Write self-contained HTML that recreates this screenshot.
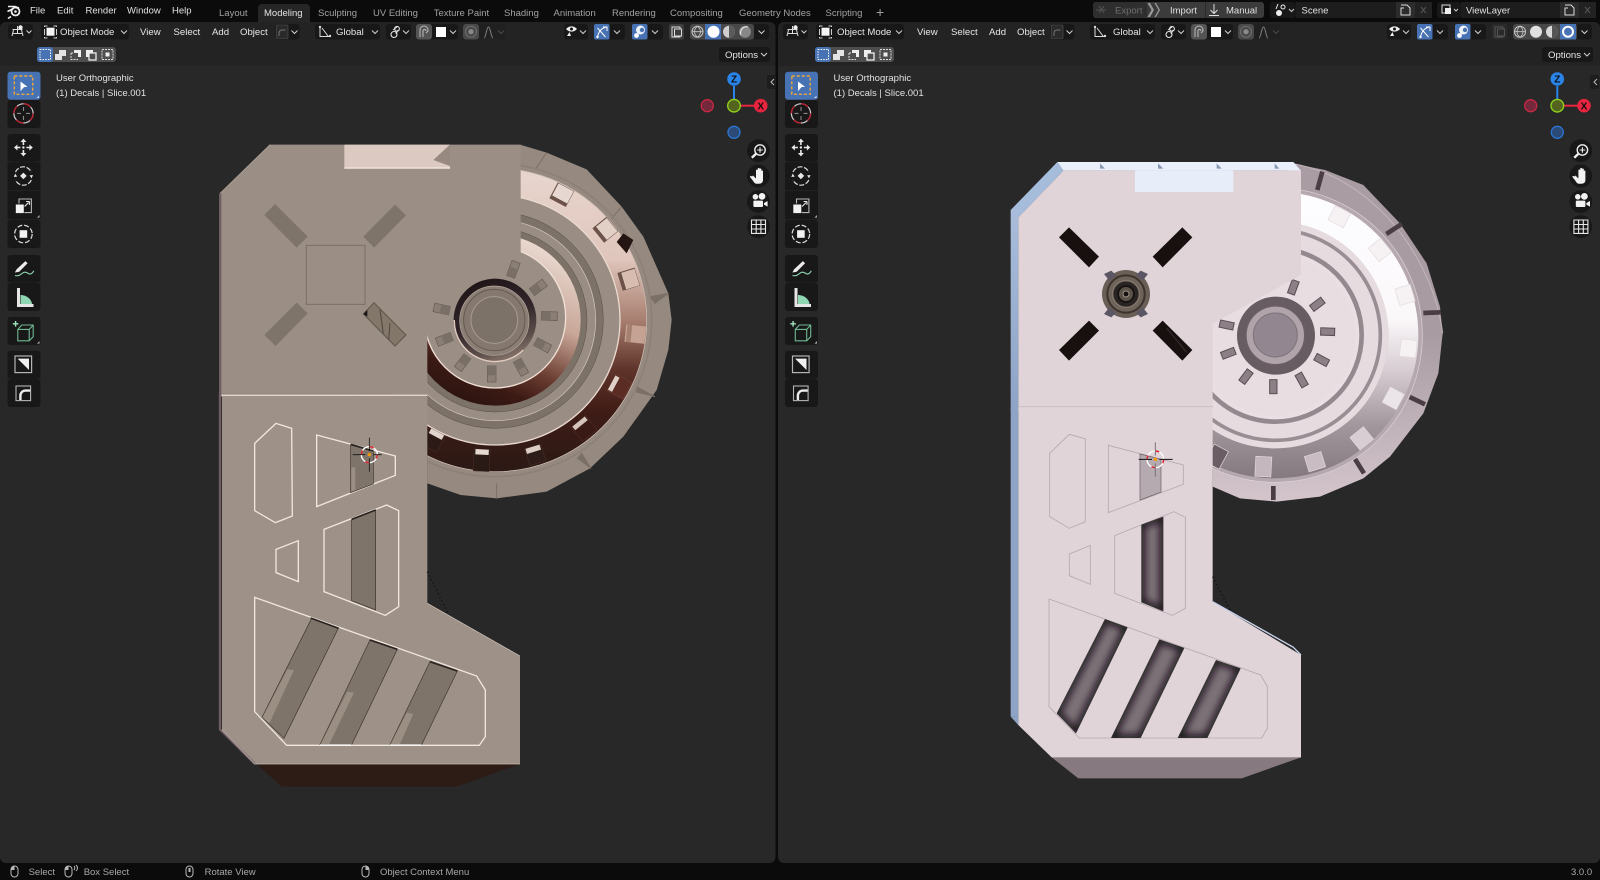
<!DOCTYPE html>
<html><head><meta charset="utf-8"><style>
html,body{margin:0;padding:0;background:#0b0b0b;width:1600px;height:880px;overflow:hidden}
svg{display:block}
text{font-family:"Liberation Sans",sans-serif;font-size:9.5px;fill:#d8d8d8}
.m{fill:#e2e2e2}.t{fill:#a2a2a2}.s{fill:#a8a8a8}.o{fill:#e6e6e6;font-size:9.6px}
.i{fill:none;stroke:#e0e0e0;stroke-width:1.2}
.g{fill:#181818}
.ax{font-size:10px;font-weight:bold;fill:#101010;text-anchor:middle}
</style></head><body>
<svg width="1600" height="880" viewBox="0 0 1600 880" xmlns="http://www.w3.org/2000/svg">
<defs>
<linearGradient id="band" gradientUnits="userSpaceOnUse" x1="0" y1="110" x2="0" y2="1030">
<stop offset="0" stop-color="#e8d6ce"/><stop offset=".3" stop-color="#e0c6bc"/><stop offset=".5" stop-color="#a87f71"/><stop offset=".66" stop-color="#5f342a"/><stop offset=".8" stop-color="#3f1c16"/><stop offset="1" stop-color="#2a1814"/></linearGradient>
<linearGradient id="cham" gradientUnits="userSpaceOnUse" x1="1010" y1="340" x2="790" y2="830">
<stop offset="0" stop-color="#ecdcd3"/><stop offset=".4" stop-color="#c8a698"/><stop offset=".68" stop-color="#6c3e32"/><stop offset=".85" stop-color="#3c1a14"/><stop offset="1" stop-color="#2c1410"/></linearGradient>
<linearGradient id="hole" gradientUnits="userSpaceOnUse" x1="800" y1="445" x2="900" y2="695">
<stop offset="0" stop-color="#1e1416"/><stop offset=".5" stop-color="#32262a"/><stop offset=".8" stop-color="#5c4e4a"/><stop offset="1" stop-color="#8c7a70"/></linearGradient>
<linearGradient id="band2" gradientUnits="userSpaceOnUse" x1="0" y1="150" x2="0" y2="1010">
<stop offset="0" stop-color="#fdfdff"/><stop offset=".45" stop-color="#fbf8fa"/><stop offset=".62" stop-color="#d9cfd4"/><stop offset=".82" stop-color="#a2979c"/><stop offset="1" stop-color="#857a80"/></linearGradient>
<linearGradient id="out2" gradientUnits="userSpaceOnUse" x1="0" y1="70" x2="0" y2="1085">
<stop offset="0" stop-color="#a99ca3"/><stop offset=".5" stop-color="#a89ba2"/><stop offset="1" stop-color="#d3c5cb"/></linearGradient>
<linearGradient id="side2" x1="0" y1="0" x2="0" y2="1">
<stop offset="0" stop-color="#a9bddb"/><stop offset="1" stop-color="#8ea4c6"/></linearGradient>
<filter id="bl" x="-30%" y="-30%" width="160%" height="160%"><feGaussianBlur stdDeviation="11"/></filter>
<clipPath id="slits"><polygon points="424,374 490,350 490,634 424,607"/><polygon points="315,657 383,682 228,1000 170,940"/><polygon points="478,718 553,744 422,1014 333,1014"/><polygon points="648,780 722,805 622,1014 533,1014"/></clipPath>

<g id="slotL"><rect x="-13" y="-24" width="26" height="48" fill="#8a7e75" stroke="#625a52" stroke-width="2"/><rect x="-13" y="-4" width="26" height="28" fill="#7a6f66"/></g>
<g id="slotR"><rect x="-11" y="-21" width="22" height="42" fill="#8c8086" stroke="#5a4e54" stroke-width="3"/></g>

<!-- toolbar -->
<g id="tools">
<rect x="7.5" y="100" width="33" height="28" rx="3" class="g"/>
<rect x="7.5" y="134" width="33" height="27.7" rx="3" class="g"/>
<rect x="7.5" y="162.3" width="33" height="28" class="g"/>
<rect x="7.5" y="191" width="33" height="28.3" class="g"/>
<rect x="7.5" y="220" width="33" height="28" rx="3" class="g"/>
<rect x="7.5" y="255" width="33" height="27.6" rx="3" class="g"/>
<rect x="7.5" y="283" width="33" height="28" rx="3" class="g"/>
<rect x="7.5" y="317" width="33" height="28" rx="3" class="g"/>
<rect x="7.5" y="350.7" width="33" height="28" rx="3" class="g"/>
<rect x="7.5" y="379" width="33" height="28" rx="3" class="g"/>
<circle cx="23.5" cy="113.4" r="9.6" fill="none" stroke="#cfcfcf" stroke-width="1.2"/>
<circle cx="23.5" cy="113.4" r="9.6" fill="none" stroke="#b8202f" stroke-width="1.4" stroke-dasharray="8 7"/>
<path d="M23.5 107v4M23.5 116v4M17 113.4h4M26 113.4h4" stroke="#8a8a8a" stroke-width="1.1" fill="none"/>
<path d="M23.4 138.6l-3 3.4h2.2v3h1.6v-3h2.2zM23.4 156.4l-3-3.4h2.2v-3h1.6v3h2.2zM14 147.5l3.4-3v2.2h3v1.6h-3v2.2zM32.8 147.5l-3.4-3v2.2h-3v1.6h3v2.2z" fill="#e8e8e8"/>
<circle cx="23.4" cy="147.5" r="1.2" fill="#e8e8e8"/>
<path d="M15.5 172a8.6 8.6 0 0 1 15.8 0M31.3 180a8.6 8.6 0 0 1-15.8 0" class="i" stroke-dasharray="5 1.6"/>
<path d="M23.4 172.6l3.3 3.3-3.3 3.3-3.3-3.3z" fill="#e8e8e8"/><path d="M13.8 177l3.4-.4-2-3zM33 175l-3.4.4 2 3z" fill="#e8e8e8"/>
<rect x="15.8" y="204.5" width="8" height="8.6" fill="#f2f2f2"/><path d="M19 203.5v-4.5h12.4v13.6h-7" fill="none" stroke="#b8b8b8" stroke-width="1.1"/><path d="M24.6 206.5l4-4M29.5 201.5h-3.4M29.5 201.5v3.4" stroke="#e8e8e8" stroke-width="1.1" fill="none"/>
<circle cx="23.4" cy="234" r="8.8" class="i" stroke-dasharray="5 2"/><rect x="19.6" y="230.2" width="7.6" height="7.6" fill="#f2f2f2"/>
<path d="M14.8 272.5l2-3.4 8.6-8 2.2 2.2-8.4 8.4z" fill="#ececec"/>
<path d="M15 275.5c4 1 5.5-1 8-2.7 3-2 5 1 6.6 1.2 2 .2 3.3-1.6 4.2-3.2" fill="none" stroke="#8fd6b2" stroke-width="1.1"/>
<path d="M17 288v19h16.5v-3H20v-16z" fill="#e6e6e6"/><path d="M20.5 295c6.5 0 11.2 4.6 11.5 9H20.5z" fill="#8fd6b2"/>
<path d="M15.6 321v5.6M12.8 323.8h5.6" stroke="#9fe6c0" stroke-width="1.4"/>
<path d="M17.8 329.4l4-4.4h11.4v11.6l-4 4.2H17.8zM17.8 329.4h11.4v11.4M29.2 329.4l4-4.4" fill="none" stroke="#6fb892" stroke-width="1.1"/>
<rect x="15" y="356" width="16.6" height="16.6" fill="none" stroke="#b4b4b4" stroke-width="1.2"/><path d="M17.6 358.6h11.4v11.4z" fill="#f0f0f0"/>
<rect x="16" y="386" width="14.6" height="14.6" fill="none" stroke="#b4b4b4" stroke-width="1.1"/><path d="M20.4 400v-4.4a5 5 0 0 1 5-5h4.8" fill="none" stroke="#eee" stroke-width="2.4"/>
<path d="M39.5 217.6l-2.6 0 2.6-2.6zM39.5 343.6l-2.6 0 2.6-2.6z" fill="#aaa"/>
</g>

<!-- nav -->
<g id="nav">
<circle cx="758.4" cy="150.7" r="11.4" fill="#181818"/><circle cx="758.4" cy="176" r="11.4" fill="#181818"/><circle cx="758.4" cy="201.6" r="11.4" fill="#181818"/><circle cx="758.4" cy="226.7" r="11.4" fill="#181818"/>
<circle cx="760" cy="150" r="5.2" fill="none" stroke="#eee" stroke-width="1.4"/><path d="M760 147.2v5.6M757.2 150h5.6" stroke="#eee" stroke-width="1.1"/><path d="M756.2 153.6l-4.4 4.2" stroke="#eee" stroke-width="2.4"/>
<path d="M753 175.5l3 3v-8.4a1 1 0 0 1 1.8 0v5.4-7a1 1 0 0 1 1.8 0v7-6.4a1 1 0 0 1 1.8 0v6.8-5a1 1 0 0 1 1.6 0v9c0 2.6-1.5 3.8-4 3.8h-2c-2 0-2.8-1-4-3l-2.8-3.4c-.8-1 .6-1.8 1.8-.8z" fill="#f2f2f2"/>
<circle cx="755.4" cy="196.8" r="2.8" fill="#f2f2f2"/><circle cx="762" cy="196.4" r="3.4" fill="#f2f2f2"/><rect x="753.4" y="200.6" width="9.6" height="6.4" rx="1" fill="#f2f2f2"/><path d="M764 203l3.6-2v5.6l-3.6-2z" fill="#f2f2f2"/>
<path d="M751.5 220h14v13.4h-14zM756.2 220v13.4M760.9 220v13.4M751.5 224.5h14M751.5 229h14" fill="none" stroke="#e8e8e8" stroke-width="1.1"/>
</g>

<!-- header left cluster -->
<g id="hL">
<rect x="8" y="24" width="25" height="15.5" rx="3" class="g"/>
<path d="M12.5 29.5h10M13.5 30l-1.5 6M21.5 30l1.5 6M13 33.5h9M17.5 26v8" stroke="#dcdcdc" stroke-width="1" fill="none"/><circle cx="20.5" cy="27.5" r="2.2" fill="#eee"/><path d="M26.5 30.5l2.5 2.5 2.5-2.5" stroke="#cfcfcf" fill="none"/>
<rect x="41" y="24" width="88" height="15.5" rx="3" class="g"/>
<path d="M44.5 27v-1h3M44.5 37v1h3M53.5 26h3v1M53.5 38h3v-1M44.5 29v6M56.5 29v6" stroke="#ccc" fill="none" stroke-width="1"/><rect x="46.5" y="27.7" width="8" height="8" fill="#f4f4f4"/>
<path d="M121 30.5l3 3 3-3" stroke="#cfcfcf" fill="none"/>
<rect x="275.5" y="24" width="24" height="15.5" rx="3" class="g"/><rect x="276.5" y="25" width="11.5" height="13.5" rx="1" fill="#2a2a2a" stroke="#555" stroke-width=".6"/><path d="M279 36v-3a3 3 0 0 1 3-3h3.5" stroke="#777" fill="none"/><path d="M291.5 30.5l3 3 3-3" stroke="#cfcfcf" fill="none"/>
<rect x="315" y="24" width="65" height="15.5" rx="3" class="g"/><path d="M320 27v9.5h10M322 28l6 8" stroke="#ddd" fill="none" stroke-width="1"/><circle cx="320" cy="27" r="1.2" fill="#ddd"/><circle cx="330" cy="36" r="1.2" fill="#ddd"/><path d="M372 30.5l3 3 3-3" stroke="#cfcfcf" fill="none"/>
<rect x="386" y="24" width="25" height="15.5" rx="3" class="g"/><circle cx="394" cy="34.5" r="3" fill="none" stroke="#e4e4e4" stroke-width="1.1"/><circle cx="397" cy="28.8" r="2.4" fill="none" stroke="#e4e4e4" stroke-width="1.1"/><path d="M393 30l4-3M396 34l2-4" stroke="#e4e4e4" fill="none"/><path d="M403 30.5l3 3 3-3" stroke="#cfcfcf" fill="none"/>
<rect x="416" y="24" width="42" height="15.5" rx="3" class="g"/><rect x="416" y="24" width="16" height="15.5" rx="3" fill="#545454"/><path d="M420 37v-7a4 4 0 0 1 8 0v1l-2 2M423 37v-6a1.5 1.5 0 0 1 3 0" stroke="#bbb" fill="none"/><rect x="436" y="27" width="10" height="10" fill="#fff"/><path d="M450 30.5l3 3 3-3" stroke="#cfcfcf" fill="none"/>
<rect x="463" y="24" width="42" height="15.5" rx="3" fill="#202020"/><rect x="463" y="24" width="16" height="15.5" rx="3" fill="#4a4a4a"/><circle cx="471" cy="31.7" r="2.6" fill="#8a8a8a"/><circle cx="471" cy="31.7" r="5.5" fill="none" stroke="#707070"/><path d="M484 38c2 0 2.5-11 4.5-11s2.5 11 4.5 11" stroke="#808080" fill="none"/><path d="M498 30.5l3 3 3-3" stroke="#4a4a4a" fill="none"/>
</g>
<g id="hR">
<rect x="564" y="24" width="24" height="15.5" rx="3" class="g"/><path d="M566 29c3-3.5 8-3.5 11 0-3 3.5-8 3.5-11 0z" fill="#eee"/><circle cx="571.5" cy="29" r="1.5" fill="#181818"/><path d="M567 36l2.5-4 1.5 4z" fill="#eee"/><path d="M580 30.5l3 3 3-3" stroke="#cfcfcf" fill="none"/>
<rect x="609" y="24" width="16" height="15.5" rx="3" class="g"/><path d="M614 30.5l3 3 3-3" stroke="#cfcfcf" fill="none"/>
<rect x="647" y="24" width="16" height="15.5" rx="3" class="g"/><path d="M652 30.5l3 3 3-3" stroke="#cfcfcf" fill="none"/>
<rect x="690" y="24" width="64" height="15.5" rx="3" fill="#484848"/><rect x="754" y="24" width="15" height="15.5" rx="3" class="g"/><path d="M758.5 30.5l3 3 3-3" stroke="#cfcfcf" fill="none"/>
</g>
<!-- select mode group -->
<g id="sel">
<rect x="37" y="47" width="79" height="15" rx="3" fill="#4e4e4e"/><rect x="37" y="47" width="16" height="15" rx="3" fill="#4772b3"/>
<rect x="40" y="49.5" width="10.5" height="10" fill="none" stroke="#fff" stroke-dasharray="1.5 1.2"/>
<path d="M55 60v-6h4v-4h7v6h-4v4z" fill="#e4e4e4"/><path d="M71 53v6.5h7M71 53h2" fill="none" stroke="#ddd" stroke-dasharray="2 1"/><path d="M74 50h7v7h-3v-4h-4z" fill="#eee"/>
<path d="M86 50h7v2.5h-4.5v4.5h-2.500z" fill="#eee"/><rect x="89" y="53" width="7" height="7" fill="#4e4e4e" stroke="#eee" stroke-width="1.3"/>
<rect x="102" y="49.5" width="11" height="10" fill="none" stroke="#ddd" stroke-dasharray="2 1"/><rect x="105.5" y="52.5" width="4" height="4" fill="#eee"/>
</g>
</defs>

<rect width="1600" height="880" fill="#0b0b0b"/>

<!-- TOP BAR -->
<circle cx="15.5" cy="11.5" r="4" fill="none" stroke="#eee" stroke-width="1.8"/><path d="M8 6.5h7l4 1.500M7.500 11.500l6-3M11 16.500l-3 2" stroke="#eee" stroke-width="1.6" fill="none"/><circle cx="15.5" cy="11.5" r="1.3" fill="#eee"/>
<text x="30" y="13.5" class="m">File</text><text x="57" y="13.5" class="m">Edit</text><text x="85.5" y="13.5" class="m">Render</text><text x="127" y="13.5" class="m">Window</text><text x="172" y="13.5" class="m">Help</text>
<path d="M258 8a4 4 0 0 1 4-4h44a4 4 0 0 1 4 4v14h-52z" fill="#262626"/>
<g><text x="219" y="16" class="t">Layout</text><text x="264" y="16" class="m">Modeling</text><text x="318" y="16" class="t">Sculpting</text><text x="373" y="16" class="t">UV Editing</text><text x="433.7" y="16" class="t">Texture Paint</text><text x="504" y="16" class="t">Shading</text><text x="553.5" y="16" class="t">Animation</text><text x="612" y="16" class="t">Rendering</text><text x="670" y="16" class="t">Compositing</text><text x="739" y="16" class="t">Geometry Nodes</text><text x="825.5" y="16" class="t">Scripting</text><text x="876" y="17" class="t" style="font-size:14px">+</text></g>
<rect x="1093" y="2" width="171" height="16" rx="3" fill="#3b3b3b"/><rect x="1093" y="2" width="54" height="16" rx="3" fill="#2e2e2e"/>
<path d="M1099 6l5 7M1104 6l-5 7M1096 10h10" stroke="#555" fill="none"/>
<text x="1115" y="13.5" style="fill:#6e6e6e">Export</text>
<path d="M1150 3l4 7-4 7h-2.5l4-7-4-7zM1156 3l4 7-4 7h-1.5l4-7-4-7z" fill="#9a9a9a"/>
<text x="1170" y="13.5" class="m">Import</text><path d="M1205.5 2v16" stroke="#2a2a2a"/>
<path d="M1214 4v9M1210.5 10l3.5 3.5 3.5-3.5M1209 15.5h10" stroke="#ddd" fill="none"/>
<text x="1226" y="13.5" class="m">Manual</text>
<rect x="1270" y="2" width="26" height="16" rx="3" class="g"/><circle cx="1279" cy="13" r="3" fill="#eee"/><circle cx="1283" cy="7" r="2" fill="none" stroke="#eee"/><path d="M1278 4l-2 5" stroke="#eee" fill="none"/><path d="M1289 9l2.5 2.5 2.5-2.5" stroke="#ccc" fill="none"/>
<rect x="1296" y="2" width="100" height="16" fill="#1d1d1d"/><text x="1301.5" y="13.5" class="m">Scene</text>
<rect x="1396" y="2" width="19" height="16" fill="#2c2c2c"/><path d="M1401 5h6l3 3v7h-6M1404 8h-3v7h6" stroke="#ddd" fill="none"/>
<rect x="1415" y="2" width="17" height="16" fill="#222"/><path d="M1421 7l5 6M1426 7l-5 6" stroke="#555"/>
<rect x="1437" y="2" width="24" height="16" rx="3" class="g"/><path d="M1442 5h8v8h-8z" stroke="#ddd" fill="#181818"/><rect x="1445" y="8" width="6" height="6" fill="#eee"/><path d="M1454 9l2 2 2-2" stroke="#ccc" fill="none"/>
<rect x="1461" y="2" width="99" height="16" fill="#1d1d1d"/><text x="1466" y="13.5" class="m">ViewLayer</text>
<rect x="1560" y="2" width="19" height="16" fill="#2c2c2c"/><path d="M1565 5h6l3 3v7h-6M1568 8h-3v7h6" stroke="#ddd" fill="none"/>
<rect x="1579" y="2" width="17" height="16" fill="#222"/><path d="M1585 7l5 6M1590 7l-5 6" stroke="#555"/>

<!-- VIEWPORTS -->
<rect x="0" y="22" width="775.5" height="841" rx="6" fill="#282828"/>
<rect x="778" y="22" width="822" height="841" rx="6" fill="#282828"/>
<path d="M0 66V28a6 6 0 0 1 6-6h763.5a6 6 0 0 1 6 6v38z" fill="#232323"/>
<path d="M778 66V28a6 6 0 0 1 6-6h810a6 6 0 0 1 6 6v38z" fill="#232323"/>

<!-- LEFT MODEL: circle -->
<g transform="translate(210,130) scale(.33333)">
<polygon points="930,44 1010,68 1130,118 1235,230 1300,320 1375,490 1385,570 1375,660 1340,780 1240,920 1140,1015 1010,1085 860,1105 752,1095 652,1060 652,300" fill="#968a80"/>
<path d="M1010 68l-34 50M1235 230l-30 35M1320 500l55-10-40 30zM1280 770l55 30-55-14zM1115 970l28 45-40-30zM860 1060v45" stroke="#7b7067" stroke-width="3" fill="#7b7067"/>
<circle cx="855" cy="570" r="470" fill="none" stroke="#8d8177" stroke-width="5"/>
<circle cx="855" cy="570" r="455" fill="#a39689" stroke="#d7c8bd" stroke-width="2"/>
<circle cx="855" cy="570" r="415" fill="none" stroke="url(#band)" stroke-width="78"/>
<path d="M1240 310l30 20-20 40-30-34z" fill="#251512"/>
<circle cx="855" cy="570" r="375" fill="#9a8e84" stroke="#ead9cf" stroke-width="4"/>
<circle cx="855" cy="570" r="325" fill="#7d7268" stroke="#3d3631" stroke-width="1"/>
<circle cx="855" cy="570" r="302" fill="#9a8e84" stroke="#d9cabf" stroke-width="2"/>
<circle cx="855" cy="570" r="276" fill="#7d7268" stroke="#3d3631" stroke-width="1"/>
<circle cx="855" cy="570" r="257" fill="url(#cham)"/>
<circle cx="855" cy="562" r="212" fill="#9b8f85" stroke="#f0e0d6" stroke-width="4"/>
<g>
<use href="#slotL" transform="translate(910,418) rotate(20)"/><use href="#slotL" transform="translate(985,472) rotate(53)"/><use href="#slotL" transform="translate(1018,558) rotate(92)"/><use href="#slotL" transform="translate(998,646) rotate(118)"/><use href="#slotL" transform="translate(933,712) rotate(151)"/><use href="#slotL" transform="translate(845,732) rotate(180)"/><use href="#slotL" transform="translate(758,698) rotate(217)"/><use href="#slotL" transform="translate(703,628) rotate(249)"/><use href="#slotL" transform="translate(695,537) rotate(282)"/>
</g>
<circle cx="855" cy="570" r="124" fill="url(#hole)"/>
<path d="M733 570A122 122 0 0 0 940 660" fill="none" stroke="#e2cbbf" stroke-width="4"/>
<circle cx="853" cy="572" r="104" fill="#8b7f75" stroke="#b8a89d" stroke-width="2"/>
<circle cx="853" cy="570" r="92" fill="#85796f" stroke="#63594f" stroke-width="3"/>
<circle cx="853" cy="570" r="70" fill="#7d7268" stroke="#a89a8e" stroke-width="3"/>
<g transform="translate(1055,195) rotate(28)"><rect x="-28" y="-28" width="56" height="54" fill="#6d5249"/><rect x="-24" y="-26" width="50" height="40" fill="#e6d8d0" stroke="#f4ece6"/></g>
<g transform="translate(1185,300) rotate(51)"><rect x="-28" y="-28" width="56" height="54" fill="#6d5249"/><rect x="-24" y="-26" width="50" height="40" fill="#e2cfc6" stroke="#f4ece6"/></g>
<g transform="translate(1255,448) rotate(73)"><rect x="-28" y="-28" width="56" height="54" fill="#6d5249"/><rect x="-24" y="-26" width="50" height="40" fill="#d8bcb0" stroke="#f0e4dc"/></g>
<g transform="translate(1272,612) rotate(96)"><rect x="-26" y="-34" width="52" height="60" fill="#c5a293"/><rect x="-26" y="8" width="52" height="14" fill="#a4806f"/></g>
<g transform="translate(1228,770) rotate(118)"><rect x="-28" y="-28" width="56" height="54" fill="#5a2c24" stroke="#7c5045"/><rect x="-24" y="12" width="48" height="14" fill="#e0d0c8"/></g>
<g transform="translate(1122,895) rotate(141)"><rect x="-28" y="-28" width="56" height="54" fill="#3a1a15" stroke="#6a4036"/><rect x="-24" y="12" width="48" height="14" fill="#d4c4bc"/></g>
<g transform="translate(975,975) rotate(163)"><rect x="-26" y="-26" width="50" height="52" fill="#2e1c18" stroke="#5c3a30"/><rect x="-22" y="10" width="44" height="16" fill="#dccdc5"/></g>
<g transform="translate(815,990) rotate(183)"><rect x="-24" y="-34" width="48" height="66" fill="#2a1a16" stroke="#5c3a30"/><rect x="-20" y="16" width="40" height="16" fill="#e4d8d0"/></g>
<g transform="translate(670,930) rotate(208)"><rect x="-26" y="-28" width="52" height="56" fill="#2c1a16" stroke="#5c3a30"/><rect x="-22" y="12" width="44" height="16" fill="#e0d4cc"/></g>
</g>
<!-- LEFT MODEL: lower plate -->
<g transform="translate(210,390) scale(.33333)">
<polygon points="36,1020 135,1122 930,1122 930,798 652,640 652,10 36,10" fill="#9e9288"/>
<polygon points="140,1122 215,1190 740,1190 930,1122" fill="#2d1c16"/>
<path d="M30 10V1018L135 1122" stroke="#6f5f63" stroke-width="7" fill="none"/>
<path d="M36 1020L135 1122H930" stroke="#c5b8ae" stroke-width="2" fill="none"/>
<path d="M652 640L930 798" stroke="#d6c8bd" stroke-width="2"/>
<path d="M652 545l62 125" stroke="#16120f" stroke-width="4" stroke-dasharray="4 8"/>
<g fill="#9e9288" stroke="#efe6dd" stroke-width="4">
<polygon points="198,100 245,115 247,378 196,398 134,362 134,160"/>
<polygon points="320,135 556,198 556,256 320,350"/>
<polygon points="198,478 265,452 265,575 198,548"/>
<polygon points="342,418 530,345 566,362 566,650 526,676 342,605"/>
<polygon points="134,622 800,858 826,900 826,1040 808,1066 230,1066 134,965"/>
</g>
<g fill="#7e746a" stroke="#3c332c" stroke-width="2">
<polygon points="422,165 490,183 490,282 422,308"/>
<polygon points="425,388 497,360 497,660 425,632"/>
<polygon points="305,685 385,715 222,1045 156,982"/>
<polygon points="480,750 562,778 425,1064 330,1064"/>
<polygon points="660,815 742,843 635,1064 540,1064"/>
</g>
<g fill="#9b8f84">
<polygon points="424,232 436,232 436,300 424,304"/>
<polygon points="232,838 252,840 178,1000 157,982"/>
<polygon points="412,905 432,908 358,1062 332,1062"/>
<polygon points="590,968 610,972 570,1062 542,1062"/>
</g>
<path d="M330 1065h95M540 1065h95" stroke="#fff" stroke-width="4"/>
<path d="M302 684l84 31M480 750l82 28M660 815l82 28M422 163l68 20M425 388l72-28" stroke="#2a2320" stroke-width="5" fill="none"/>
<circle cx="478" cy="194" r="24" fill="none" stroke="#fff" stroke-width="4"/><circle cx="478" cy="194" r="24" fill="none" stroke="#e0202c" stroke-width="4.4" stroke-dasharray="12 26"/>
<path d="M478 143v40M478 205v40M428 194h38M490 194h25" stroke="#111" stroke-width="2.4"/><circle cx="478" cy="194" r="5" fill="#f39a00"/>
</g>
<!-- LEFT MODEL: upper plate -->
<g transform="translate(210,130) scale(.33333)">
<polygon points="180,44 932,44 932,375 652,530 652,790 30,790 30,190" fill="#9b8f85"/>
<path d="M30 190L180 44" stroke="#b5a89d" stroke-width="2"/>
<rect x="403" y="44" width="317" height="72" fill="#dcc9c1"/><rect x="403" y="112" width="317" height="4" fill="#f0e6e0"/>
<polygon points="720,44 670,90 720,108" fill="#97897f"/>
<g fill="#7e746a"><polygon points="195,222 293,320 260,353 163,255"/><polygon points="555,224 588,256 492,353 460,320"/><polygon points="260,518 293,550 197,648 163,615"/></g>
<polygon points="492,518 588,615 555,648 460,552" fill="#837769" stroke="#5e554b" stroke-width="3"/>
<path d="M510 540l10 70M540 580l-4 50" stroke="#4e463f" stroke-width="3" fill="none"/>
<path d="M460 552l12-12v20z" fill="#1a1615"/>
<rect x="289" y="346" width="176" height="177" fill="none" stroke="#7a6f65" stroke-width="3"/>
<rect x="30" y="790" width="622" height="10" fill="#9e9288"/>
<rect x="30" y="794" width="622" height="4" fill="#e4d4ca"/>
<rect x="27" y="190" width="7" height="610" fill="#6f5f63"/>
</g>

<!-- RIGHT MODEL: circle -->
<g transform="translate(1000,140) scale(.33333)">
<polygon points="885,72 975,90 1090,135 1200,250 1280,370 1320,500 1328,580 1315,700 1270,820 1170,950 1090,1015 960,1070 830,1085 720,1075 638,1040 638,300" fill="url(#out2)"/>
<path d="M885 72C1130 120 1300 360 1328 580" fill="none" stroke="#c2b6bc" stroke-width="3"/>
<g stroke="#4a3e44" stroke-width="14"><path d="M967 95l-15 55M1205 252l-46 30M1322 517l-52 2M1275 793l-46-22M1092 1000l-30-48M820 1080v-42"/></g>
<circle cx="825" cy="585" r="442" fill="#b5a8ae" stroke="#ded4d9" stroke-width="2"/>
<circle cx="825" cy="585" r="385" fill="none" stroke="url(#band2)" stroke-width="90"/>
<circle cx="825" cy="585" r="340" fill="#e6dce0"/>
<circle cx="825" cy="585" r="316" fill="#e6dce0" stroke="#9a8e94" stroke-width="11"/>
<circle cx="825" cy="585" r="260" fill="#eae0e4" stroke="#958990" stroke-width="14"/>
<circle cx="825" cy="585" r="242" fill="#e8dee2"/>
<use href="#slotR" transform="translate(880,442) rotate(20)"/><use href="#slotR" transform="translate(952,493) rotate(53)"/><use href="#slotR" transform="translate(983,575) rotate(92)"/><use href="#slotR" transform="translate(965,660) rotate(118)"/><use href="#slotR" transform="translate(905,720) rotate(151)"/><use href="#slotR" transform="translate(820,740) rotate(180)"/><use href="#slotR" transform="translate(738,710) rotate(217)"/><use href="#slotR" transform="translate(685,640) rotate(249)"/><use href="#slotR" transform="translate(680,555) rotate(282)"/>
<circle cx="828" cy="587" r="117" fill="#675c62"/>
<circle cx="826" cy="586" r="88" fill="#b0a4aa" stroke="#6c6066" stroke-width="4"/>
<circle cx="826" cy="585" r="66" fill="#928790" stroke="#7e7379" stroke-width="3"/>
<g fill="#f6f2f4" stroke="#e2dade" stroke-width="2">
<rect x="-26" y="-24" width="52" height="48" transform="translate(1018,230) rotate(28)"/>
<rect x="-26" y="-24" width="52" height="48" transform="translate(1140,330) rotate(51)"/>
<rect x="-26" y="-24" width="52" height="48" transform="translate(1215,465) rotate(73)"/>
<rect x="-26" y="-24" width="52" height="48" transform="translate(1225,625) rotate(96)"/>
<rect x="-26" y="-24" width="52" height="48" fill="#ebe4e8" transform="translate(1180,775) rotate(118)"/>
<rect x="-26" y="-24" width="52" height="48" fill="#d8cdd2" transform="translate(1085,895) rotate(141)"/>
<rect x="-26" y="-24" width="52" height="48" fill="#c9bdc3" transform="translate(945,965) rotate(163)"/>
<rect x="-24" y="-30" width="48" height="60" fill="#c4b8be" transform="translate(790,980) rotate(183)"/>
<rect x="-24" y="-30" width="48" height="60" fill="#6a5e64" transform="translate(650,950) rotate(208)"/>
</g>
</g>
<!-- RIGHT MODEL: lower plate -->
<g transform="translate(1000,400) scale(.33333)">
<polygon points="32,950 55,975 155,1072 235,1135 725,1135 903,1072 155,1072" fill="#867a80"/>
<rect x="32" y="22" width="23" height="928" fill="#8ea4c6"/><polygon points="32,950 55,950 55,975" fill="#8ea4c6"/>
<polygon points="55,22 638,22 638,605 903,765 903,1072 155,1072 55,975" fill="#e0d4d9"/>
<path d="M638 605L880 742L903 765" stroke="#c9d4ec" stroke-width="4" fill="none"/>
<path d="M155 1072H903" stroke="#b5a8ae" stroke-width="2"/>
<path d="M638 530l55 105" stroke="#15110f" stroke-width="4" stroke-dasharray="4 8"/>
<g fill="none" stroke="#b5a8b0" stroke-width="2.5">
<polygon points="208,103 256,117 256,365 208,385 149,350 149,160"/>
<polygon points="325,136 550,195 550,253 325,338"/>
<polygon points="208,462 271,436 271,553 208,527"/>
<polygon points="344,407 522,335 556,352 556,625 517,646 344,580"/>
<polygon points="147,597 782,825 802,860 802,985 785,1014 238,1014 147,920"/>
</g>
<polygon points="420,162 483,178 483,276 420,300" fill="#b5aab0" stroke="#6a5e64" stroke-width="2"/>
<g clip-path="url(#slits)">
<rect x="100" y="300" width="700" height="750" fill="#7c7177"/>
<g filter="url(#bl)" fill="none" stroke="#150e12" stroke-width="20">
<polygon points="424,374 490,350 490,634 424,607"/>
<polygon points="315,657 383,682 228,1000 170,940"/>
<polygon points="478,718 553,744 422,1014 333,1014"/>
<polygon points="648,780 722,805 622,1014 533,1014"/>
</g>
</g>
<circle cx="466" cy="178" r="25" fill="none" stroke="#fff" stroke-width="4"/><circle cx="466" cy="178" r="25" fill="none" stroke="#e0202c" stroke-width="4.4" stroke-dasharray="12 27"/>
<path d="M466 127v40M466 190v40" stroke="#7d7278" stroke-width="3"/><path d="M416 178h40M478 178h40" stroke="#111" stroke-width="3"/><circle cx="466" cy="178" r="5" fill="#f39a00"/>
</g>
<!-- RIGHT MODEL: upper plate -->
<g transform="translate(1000,140) scale(.33333)">
<polygon points="172,66 880,66 903,92 190,92" fill="#e9effb"/>
<g fill="#8a98b4"><polygon points="300,70 315,86 300,86"/><polygon points="474,70 490,86 474,86"/><polygon points="650,70 665,86 650,86"/><polygon points="824,70 838,86 824,86"/></g>
<polygon points="172,66 190,92 55,232 32,210" fill="#a6bcdb"/>
<rect x="32" y="210" width="23" height="600" fill="url(#side2)"/>
<polygon points="190,92 903,92 903,405 638,552 638,810 55,810 55,232" fill="#e0d4d9"/>
<polygon points="405,92 700,92 700,156 405,156" fill="#e7edf9"/>
<path d="M55 800H638" stroke="#c8bac2" stroke-width="2.5"/>
<g fill="#17100f"><polygon points="207,262 297,350 267,382 177,292"/><polygon points="547,262 577,292 488,382 458,350"/><polygon points="267,542 297,572 207,662 177,630"/><polygon points="488,542 577,630 547,662 458,572"/></g>
<path d="M500 565l60 72" stroke="#332a2a" stroke-width="4"/>
<circle cx="378" cy="462" r="72" fill="#6a5e56"/>
<path d="M312 402l22-10 14 14-20 16zM444 402l-22-10-14 14 20 16zM312 522l22 10 14-14-20-16zM444 522l-22 10-14-14 20-16z" fill="#5a5664"/>
<circle cx="378" cy="462" r="56" fill="#6f645a" stroke="#3c332d" stroke-width="6"/>
<circle cx="378" cy="462" r="40" fill="#2a2522" stroke="#85796f" stroke-width="4"/>
<circle cx="378" cy="462" r="24" fill="#5b5249" stroke="#171412" stroke-width="6"/>
<circle cx="378" cy="462" r="9" fill="#141110" stroke="#a09488" stroke-width="3"/>
</g>

<!-- LEFT HEADER -->
<use href="#hL"/>
<use href="#hR"/>
<rect x="594" y="24" width="15.5" height="15.5" rx="2" fill="#4772b3"/><path d="M597.5 37c1-5 4-9 9-10M603 27h4v4M597.5 28l8 9" stroke="#fff" fill="none"/><circle cx="597.5" cy="37" r="1.2" fill="#fff"/>
<rect x="632" y="24" width="15.5" height="15.5" rx="2" fill="#4772b3"/><circle cx="640.5" cy="30" r="4.5" fill="#fff" fill-opacity=".9"/><circle cx="642" cy="30" r="2.2" fill="#4772b3"/><circle cx="636.5" cy="35.5" r="2.4" fill="#fff"/>
<rect x="669" y="24" width="15" height="15.5" rx="2" fill="#3d3d3d"/><rect x="672" y="27" width="8" height="10" fill="none" stroke="#ddd"/><rect x="674.5" y="29" width="7" height="7" fill="#3d3d3d" stroke="#ddd"/>
<rect x="705" y="24" width="16" height="15.5" fill="#4772b3"/>
<circle cx="697.5" cy="31.7" r="5.5" fill="none" stroke="#c8c8c8"/><path d="M692 31.7h11M697.5 26.2c-4 3.5-4 7.5 0 11M697.5 26.2c4 3.5 4 7.5 0 11" stroke="#c8c8c8" fill="none" stroke-width=".8"/>
<circle cx="713.5" cy="31.7" r="6" fill="#fff"/>
<circle cx="729" cy="31.7" r="6" fill="#cfcfcf"/><path d="M729 25.7a6 6 0 0 1 0 12z" fill="#5a5a5a"/>
<circle cx="745" cy="31.7" r="6" fill="#888"/><path d="M741 35a6 6 0 0 1 7-8" stroke="#eee" fill="none"/>
<text x="60" y="35" class="o">Object Mode</text><text x="140" y="35" class="o">View</text><text x="173.5" y="35" class="o">Select</text><text x="212" y="35" class="o">Add</text><text x="240" y="35" class="o">Object</text><text x="336" y="35" class="o">Global</text>
<use href="#sel"/>
<rect x="719" y="47" width="51" height="15" rx="3" class="g"/><text x="725" y="58" class="o">Options</text><path d="M761 53l3 3 3-3" stroke="#cfcfcf" fill="none"/>
<rect x="7.5" y="71.7" width="33" height="28" rx="3" fill="#4772b3"/>
<rect x="14.3" y="76" width="18.4" height="18.3" fill="none" stroke="#eda63b" stroke-width="1.4" stroke-dasharray="3 2"/>
<path d="M20.5 81.5l7 5.2-3.5.4-3.5 4z" fill="#fff"/>
<path d="M39 98l-2.4 0 2.4-2.4z" fill="#cfdcf0"/>
<use href="#tools"/>
<text x="56" y="81" class="m">User Orthographic</text><text x="56" y="96" class="m">(1) Decals | Slice.001</text>
<rect x="767" y="75" width="9" height="14" rx="2" fill="#1d1d1d"/><path d="M774 79l-3 3 3 3" stroke="#bbb" fill="none"/>
<g>
<path d="M734 86v20" stroke="#2a84e8" stroke-width="2"/><path d="M741 105.7h14" stroke="#e8243f" stroke-width="2"/>
<circle cx="734" cy="79" r="6.8" fill="#2a84e8"/><text x="734" y="82.6" class="ax">Z</text>
<circle cx="760.7" cy="105.7" r="6.8" fill="#e8243f"/><text x="760.7" y="109.3" class="ax">X</text>
<circle cx="707.3" cy="105.7" r="6" fill="#74283c" stroke="#c82a43" stroke-width="1.3"/>
<circle cx="734" cy="132.3" r="6" fill="#2c4a78" stroke="#2a76d4" stroke-width="1.3"/>
<circle cx="734" cy="105.7" r="6.3" fill="#54641f" stroke="#8ed11d" stroke-width="1.4"/>
</g>
<use href="#nav"/>

<!-- RIGHT HEADER -->
<use href="#hL" x="775"/>
<rect x="810" y="24" width="6" height="16" fill="#232323"/>
<use href="#hR" x="823"/>
<rect x="1417" y="24" width="15.5" height="15.5" rx="2" fill="#4772b3"/><path d="M1420.5 37c1-5 4-9 9-10M1426 27h4v4M1420.5 28l8 9" stroke="#fff" fill="none"/><circle cx="1420.5" cy="37" r="1.2" fill="#fff"/>
<rect x="1455" y="24" width="15.5" height="15.5" rx="2" fill="#4772b3"/><circle cx="1463.5" cy="30" r="4.5" fill="#fff" fill-opacity=".9"/><circle cx="1465" cy="30" r="2.2" fill="#4772b3"/><circle cx="1459.5" cy="35.5" r="2.4" fill="#fff"/>
<rect x="1492" y="24" width="15" height="15.5" rx="2" fill="#2a2a2a"/><rect x="1495" y="27" width="8" height="10" fill="none" stroke="#555"/><rect x="1497.5" y="29" width="7" height="7" fill="#2a2a2a" stroke="#555"/>
<rect x="1560" y="24" width="16" height="15.5" fill="#4772b3"/>
<circle cx="1520" cy="31.7" r="5.5" fill="none" stroke="#c8c8c8"/><path d="M1514.5 31.7h11M1520 26.2c-4 3.5-4 7.5 0 11M1520 26.2c4 3.5 4 7.5 0 11" stroke="#c8c8c8" fill="none" stroke-width=".8"/>
<circle cx="1536" cy="31.7" r="6" fill="#e0e0e0"/>
<circle cx="1552" cy="31.7" r="6" fill="#d8d8d8"/><path d="M1552 25.7a6 6 0 0 1 0 12z" fill="#555"/>
<circle cx="1568" cy="31.7" r="6" fill="#fff"/><circle cx="1568" cy="31.7" r="4" fill="#4772b3"/>
<text x="837" y="35" class="o">Object Mode</text><text x="917" y="35" class="o">View</text><text x="951" y="35" class="o">Select</text><text x="989" y="35" class="o">Add</text><text x="1017" y="35" class="o">Object</text><text x="1113" y="35" class="o">Global</text>
<use href="#sel" x="778"/>
<rect x="1542" y="47" width="51" height="15" rx="3" class="g"/><text x="1548" y="58" class="o">Options</text><path d="M1584 53l3 3 3-3" stroke="#cfcfcf" fill="none"/>
<rect x="785" y="71.7" width="33" height="28" rx="3" fill="#4772b3"/>
<rect x="791.8" y="76" width="18.4" height="18.3" fill="none" stroke="#eda63b" stroke-width="1.4" stroke-dasharray="3 2"/>
<path d="M798 81.5l7 5.2-3.5.4-3.5 4z" fill="#fff"/>
<path d="M816.5 98l-2.4 0 2.4-2.4z" fill="#cfdcf0"/>
<use href="#tools" x="777.5"/>
<text x="833.5" y="81" class="m">User Orthographic</text><text x="833.5" y="96" class="m">(1) Decals | Slice.001</text>
<rect x="1590" y="75" width="9" height="14" rx="2" fill="#1d1d1d"/><path d="M1597 79l-3 3 3 3" stroke="#bbb" fill="none"/>
<g>
<path d="M1557.3 86v20" stroke="#2a84e8" stroke-width="2"/><path d="M1564 105.7h14" stroke="#e8243f" stroke-width="2"/>
<circle cx="1557.3" cy="79" r="6.8" fill="#2a84e8"/><text x="1557.3" y="82.6" class="ax">Z</text>
<circle cx="1584" cy="105.7" r="6.8" fill="#e8243f"/><text x="1584" y="109.3" class="ax">X</text>
<circle cx="1530.7" cy="105.7" r="6" fill="#74283c" stroke="#c82a43" stroke-width="1.3"/>
<circle cx="1557.3" cy="132.3" r="6" fill="#2c4a78" stroke="#2a76d4" stroke-width="1.3"/>
<circle cx="1557.3" cy="105.7" r="6.3" fill="#54641f" stroke="#8ed11d" stroke-width="1.4"/>
</g>
<use href="#nav" x="822.4"/>

<!-- STATUS -->
<rect x="0" y="863" width="1600" height="17" fill="#0b0b0b"/>
<g fill="none" stroke="#b8b8b8" stroke-width="1">
<rect x="11" y="866" width="7" height="11" rx="3.5"/><rect x="65" y="866" width="7" height="11" rx="3.5"/><path d="M74 866c1 1 1 3 0 4M76 865c2 2 2 4 0 6"/>
<rect x="186" y="866" width="7" height="11" rx="3.5"/><rect x="362" y="866" width="7" height="11" rx="3.5"/>
</g>
<path d="M11 870v-.5a3.5 3.5 0 0 1 3.5-3.5v4zM65 870v-.5a3.5 3.5 0 0 1 3.5-3.5v4zM365.5 870v-4a3.5 3.5 0 0 1 3.5 3.5v.5z" fill="#b8b8b8"/><rect x="188.500" y="868" width="2" height="4" fill="#b8b8b8"/>
<text x="28.6" y="875" class="s">Select</text><text x="83.7" y="875" class="s">Box Select</text><text x="204.6" y="875" class="s">Rotate View</text><text x="380" y="875" class="s">Object Context Menu</text><text x="1571" y="875" class="s">3.0.0</text>
</svg>
</body></html>
